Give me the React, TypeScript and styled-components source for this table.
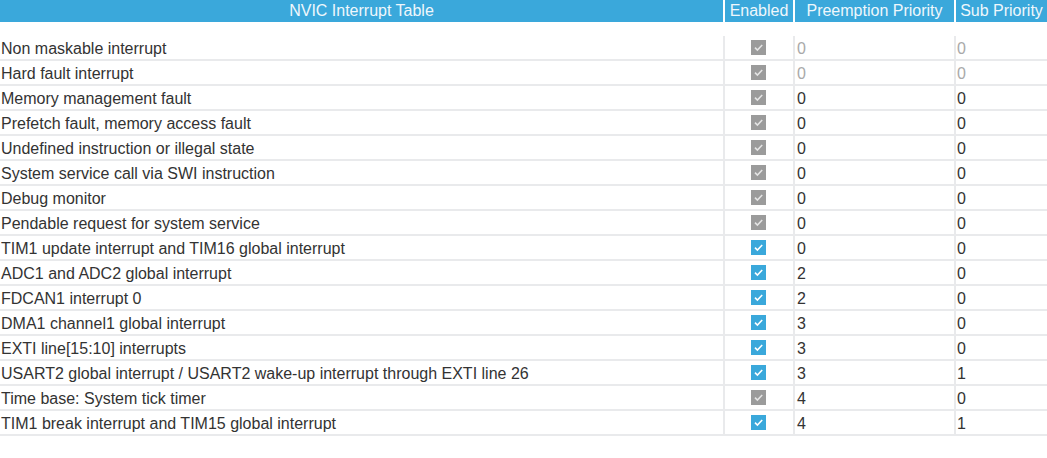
import React from "react";
import styled, { createGlobalStyle } from "styled-components";

const GlobalStyle = createGlobalStyle`
  html, body { margin: 0; padding: 0; background: #ffffff; }
  body { font-family: "Liberation Sans", Arial, sans-serif; }
`;

const COLS = "723px 68px 159px 1fr";

const Table = styled.div`
  width: 1047px;
  font-family: "Liberation Sans", Arial, sans-serif;
  font-size: 16px;
  color: #333333;
`;

const HeaderRow = styled.div`
  display: grid;
  grid-template-columns: ${COLS};
  column-gap: 2px;
  height: 22px;
  background: #ffffff;
`;

const HeaderCell = styled.div`
  background: #3aa8db;
  color: #eef7fc;
  font-size: 16px;
  display: flex;
  align-items: center;
  justify-content: center;
  white-space: nowrap;
  overflow: hidden;
`;

const Body = styled.div`
  margin-top: 14px;
  display: flex;
  flex-direction: column;
`;

const Row = styled.div`
  display: grid;
  grid-template-columns: ${COLS};
  column-gap: 2px;
  background: #e9eaec;
  padding-bottom: 2px;
`;

const Cell = styled.div<{ $pad?: number; $center?: boolean; $muted?: boolean }>`
  box-sizing: border-box;
  background: #ffffff;
  height: 23px;
  padding-top: ${(p) => (p.$center ? 0 : 2)}px;
  display: flex;
  align-items: center;
  justify-content: ${(p) => (p.$center ? "center" : "flex-start")};
  padding-left: ${(p) => p.$pad ?? 0}px;
  color: ${(p) => (p.$muted ? "#a9a9a9" : "#333333")};
  white-space: nowrap;
  overflow: hidden;
`;

const Box = styled.span<{ $active: boolean }>`
  width: 15px;
  height: 15px;
  background: ${(p) => (p.$active ? "#3aa8db" : "#9b9b9b")};
  display: inline-flex;
  align-items: center;
  justify-content: center;
  margin-left: -1px;
`;

const Check = ({ active }: { active: boolean }) => (
  <Box $active={active}>
    <svg width="11" height="11" viewBox="0 0 11 11">
      <path
        d="M2 5.6 L4.4 8 L9.2 3"
        fill="none"
        stroke={active ? "#ffffff" : "#e4e4e4"}
        strokeWidth="1.6"
      />
    </svg>
  </Box>
);

type Item = { name: string; active: boolean; pre: string; sub: string; muted?: boolean };

const rows: Item[] = [
  { name: "Non maskable interrupt", active: false, pre: "0", sub: "0", muted: true },
  { name: "Hard fault interrupt", active: false, pre: "0", sub: "0", muted: true },
  { name: "Memory management fault", active: false, pre: "0", sub: "0" },
  { name: "Prefetch fault, memory access fault", active: false, pre: "0", sub: "0" },
  { name: "Undefined instruction or illegal state", active: false, pre: "0", sub: "0" },
  { name: "System service call via SWI instruction", active: false, pre: "0", sub: "0" },
  { name: "Debug monitor", active: false, pre: "0", sub: "0" },
  { name: "Pendable request for system service", active: false, pre: "0", sub: "0" },
  { name: "TIM1 update interrupt and TIM16 global interrupt", active: true, pre: "0", sub: "0" },
  { name: "ADC1 and ADC2 global interrupt", active: true, pre: "2", sub: "0" },
  { name: "FDCAN1 interrupt 0", active: true, pre: "2", sub: "0" },
  { name: "DMA1 channel1 global interrupt", active: true, pre: "3", sub: "0" },
  { name: "EXTI line[15:10] interrupts", active: true, pre: "3", sub: "0" },
  { name: "USART2 global interrupt / USART2 wake-up interrupt through EXTI line 26", active: true, pre: "3", sub: "1" },
  { name: "Time base: System tick timer", active: false, pre: "4", sub: "0" },
  { name: "TIM1 break interrupt and TIM15 global interrupt", active: true, pre: "4", sub: "1" },
];

export default function App() {
  return (
    <>
      <GlobalStyle />
      <Table>
        <HeaderRow>
          <HeaderCell>NVIC Interrupt Table</HeaderCell>
          <HeaderCell>Enabled</HeaderCell>
          <HeaderCell>Preemption Priority</HeaderCell>
          <HeaderCell>Sub Priority</HeaderCell>
        </HeaderRow>
        <Body>
          {rows.map((r) => (
            <Row key={r.name}>
              <Cell $pad={1}>{r.name}</Cell>
              <Cell $center>
                <Check active={r.active} />
              </Cell>
              <Cell $pad={2} $muted={r.muted}>{r.pre}</Cell>
              <Cell $pad={1} $muted={r.muted}>{r.sub}</Cell>
            </Row>
          ))}
        </Body>
      </Table>
    </>
  );
}
